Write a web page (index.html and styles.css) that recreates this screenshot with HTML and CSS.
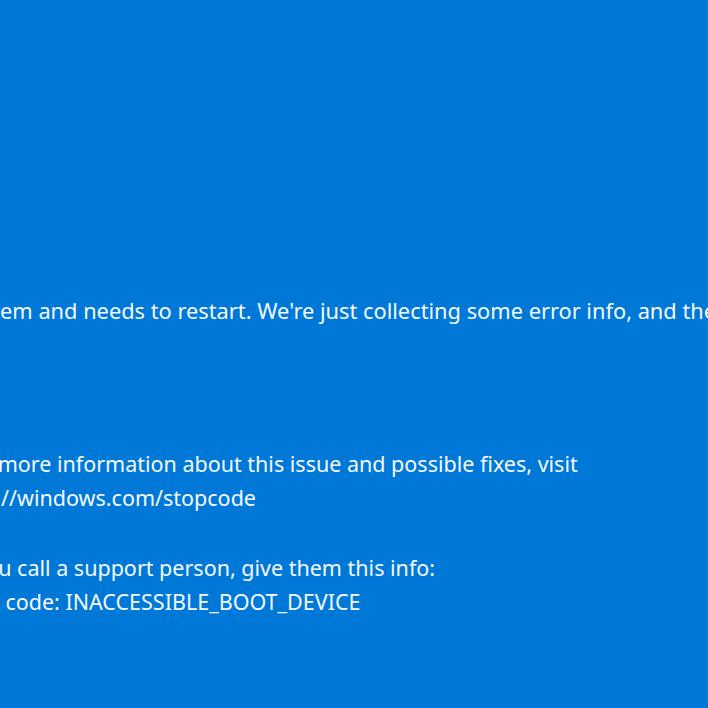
FILE: index.html
```html
<!DOCTYPE html>
<html>
<head>
  <title>Your PC ran into a problem</title>
  <link rel="stylesheet" href="styles.css">
</head>
<body>
  <div class="pantalla">
    <p class="mensaje">Your PC ran into a problem and needs to restart. We're just collecting some error info, and then we'll restart for you.</p>

    <div class="detalles">
      <p>
        <span class="linea inicio">For more information about this issue and possible fixes, visit</span>
        <span class="linea url">https://windows.com/stopcode</span>
      </p>
      <p>
        <span class="linea">If you call a support person, give them this info:</span>
        <span class="linea">Stop code: INACCESSIBLE_BOOT_DEVICE</span>
      </p>
    </div>
  </div>
</body>
</html>
```

FILE: styles.css
```css
  html, body {
      margin: 0;
      height: 100%;
      overflow: hidden;
  }

  body {
      background: #0078d7;
      color: #f4f8fd;
      font-family: "Noto Sans", "Open Sans", sans-serif;
      font-size: 21.5px;
      line-height: 34px;
  }

  .pantalla {
      padding-top: 294px;
      white-space: nowrap;
  }

  .mensaje {
      margin: 0 0 119px -243px;
      font-size: 21.8px;
  }

  .detalles p {
      margin: 0 0 36px 0;
  }

  .linea {
      display: block;
      margin-left: -46px;
  }

  .linea.inicio {
      margin-left: -41px;
  }

  .linea.url {
      margin-left: -57px;
  }
```
